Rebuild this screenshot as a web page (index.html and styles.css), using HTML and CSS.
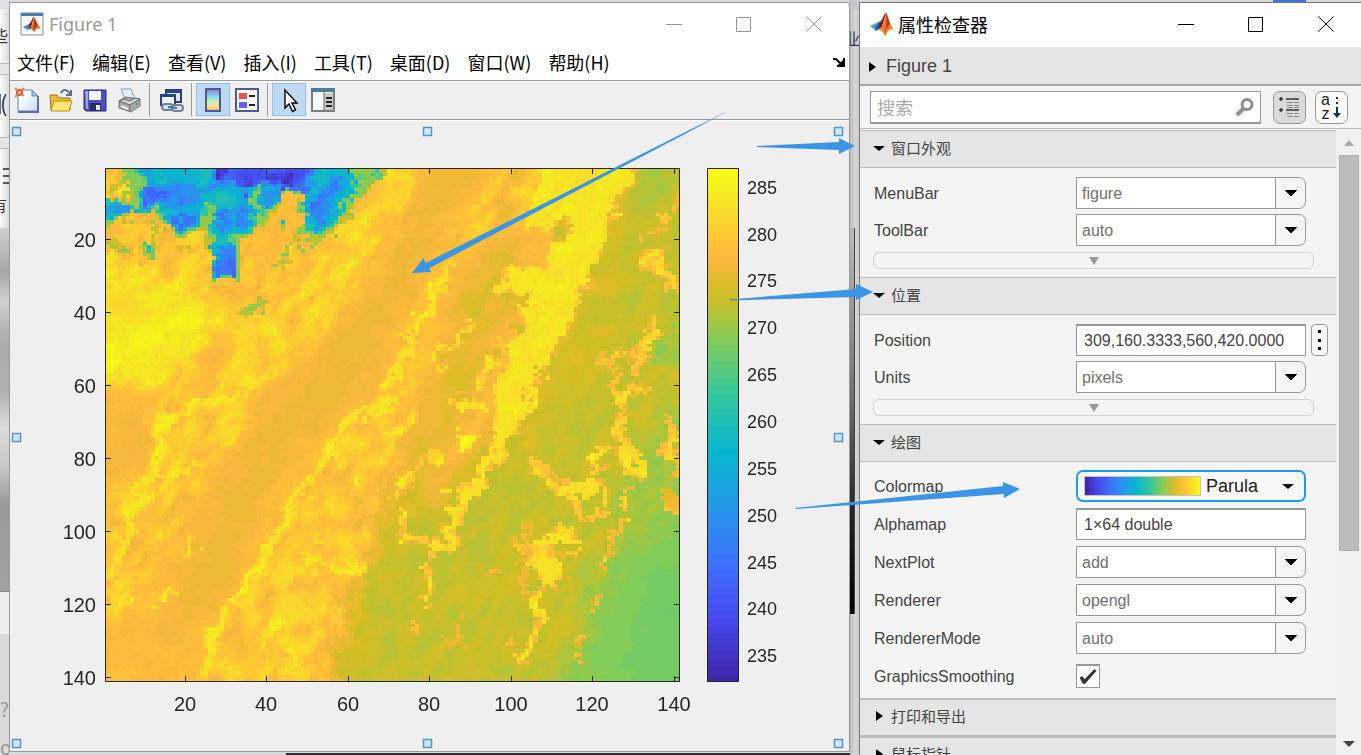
FILE: index.html
```html
<!DOCTYPE html>
<html lang="zh-CN">
<head>
<meta charset="utf-8">
<title>Figure 1</title>
<link rel="stylesheet" href="styles.css">
</head>
<body>
<div class="desktop">
  <div class="behind behind-left" aria-hidden="true">
    <span class="bl-top">些</span>
    <span class="bl-rule"></span>
    <span class="bl-paren">(</span>
    <span class="bl-rule"></span>
    <span class="bl-list"><i></i><i></i><i></i></span>
    <span class="bl-word">有</span>
    <span class="bl-photo"></span>
    <span class="bl-blank"></span>
    <span class="bl-foot">?</span>
    <span class="bl-foot">o</span>
  </div>

  <section class="window figure-window">
    <header class="titlebar inactive">
      <svg class="app-icon" width="24" height="24" viewBox="0 0 24 24"><path fill="#f4f6f7" stroke="#8b9299" d="M1 1h22v22H1z"/><path fill="#4c7ea3" d="M1 1h22v3H1z"/><path fill="#3e8bc4" d="M3 15l6-3 3-2-2 7-2 1z"/><path fill="#7d2a20" d="M9 12c3-2 3-7 5-7l-3 11-2 1z"/><path fill="#e0672a" d="M14 5c2 2 4 8 7 12-3-2-5 0-7 3-1-2-2-3-4-3 3-3 3-8 4-12z"/><path fill="#a52d1d" d="M14 5l3 8-3 4-1 3c1-4 2-9 1-15z"/></svg>
      <h1>Figure 1</h1>
      <div class="win-buttons">
        <button aria-label="最小化"><svg width="16" height="16"><path d="M0 8.500h16"/></svg></button>
        <button aria-label="最大化"><svg width="16" height="16"><path d="M.5 1.500h14v14H.5z"/></svg></button>
        <button aria-label="关闭"><svg width="16" height="16"><path d="M.5.500l15 15m0-15l-15 15"/></svg></button>
      </div>
    </header>
    <nav class="menubar">
      <button>文件(F)</button><button>编辑(E)</button><button>查看(V)</button><button>插入(I)</button><button>工具(T)</button><button>桌面(D)</button><button>窗口(W)</button><button>帮助(H)</button>
      <svg class="dock" width="12" height="10" viewBox="0 0 12 10"><path fill="none" stroke="#000" stroke-width="2" d="M0 2h3l5 5M11 1v8H4"/><path d="M11 2v7H4z"/></svg>
    </nav>
    <div class="toolbar">
      <button aria-label="新建"><svg width="26" height="26" viewBox="0 0 26 26"><defs><linearGradient id="page" x2="1" y2="1"><stop offset=".3" stop-color="#fff"/><stop offset="1" stop-color="#c3d6f3"/></linearGradient></defs><path fill="url(#page)" stroke="#6683b5" d="M4 3h14l6 6v15H4z"/><path stroke="#5a72a0" stroke-width="2" d="M24 9v16H4"  fill="none"/><path fill="#a9c1e6" stroke="#6683b5" d="M18 3v6h6z"/><path fill="none" stroke="#e08a60" stroke-width="2" d="M1 1l2 2m5 4l2 2M10 1L8 3M1 10l2-2"/><circle cx="5.500" cy="5.500" r="2.500" fill="#ffc88c" stroke="#d2603a" stroke-width="2"/></svg></button>
      <button aria-label="打开"><svg width="26" height="26" viewBox="0 0 26 26"><path fill="#e9bb3c" stroke="#a57512" d="M2 8h7l2 3h11v12H3z"/><path fill="#ffe678" stroke="#bf8e1d" d="M6 14h18l-3 10H3z"/><path fill="none" stroke="#5b7388" stroke-width="2" d="M13 6c2-4 7-4 9 1m1-4v5h-5"/></svg></button>
      <button aria-label="保存"><svg width="26" height="26" viewBox="0 0 26 26"><path fill="#4d51bd" stroke="#25297d" d="M2 3h22v21H4l-2-2z"/><path fill="#9ba3ed" d="M3 4h3v18H4z"/><path fill="#f4f6ff" d="M7 4h12v9H7z"/><path fill="#272b62" d="M8 16h11v8H8z"/><path fill="#e6e8ef" d="M14 18h4v5h-4z"/></svg></button>
      <button aria-label="打印"><svg width="26" height="26" viewBox="0 0 26 26"><path fill="#e2efff" stroke="#86a4c4" d="M5 2h10l4 10H9z"/><path fill="#a9a9a5" stroke="#777" d="M3 14l6-4 15 2v7l-9 6L3 21z"/><path fill="#d0d0d0" stroke="#666" d="M3 14l11 4 10-6-5-1-5 3-6-2z"/><path fill="none" stroke="#666" d="M14 18v6"/><path stroke="#eee" stroke-width="2" d="M5 19l7 3"/><path stroke="#47b44b" stroke-width="2" d="M20 17h2"/></svg></button>
      <span class="sep"></span>
      <button aria-label="链接绘图"><svg width="26" height="26" viewBox="0 0 26 26"><path fill="#dce5f4" stroke="#28437e" stroke-width="2" d="M8 3h15v12H8z"/><path fill="#28437e" d="M7 2h17v4H7z"/><path fill="#eef3fa" stroke="#28437e" stroke-width="2" d="M3 8h14v10H3z"/><path fill="#28437e" d="M2 7h16v3H2z"/><g fill="#dce5ee" stroke="#6d839c" stroke-width="2"><rect x="4" y="17" width="11" height="6" rx="3"/><rect x="14" y="18" width="11" height="6" rx="3"/></g><path stroke="#526b87" stroke-width="2" d="M10 20l9 1"/></svg></button>
      <span class="sep"></span>
      <button class="on" aria-label="颜色栏"><svg width="26" height="26" viewBox="0 0 26 26"><defs><linearGradient id="cb" x2="0" y2="1"><stop stop-color="#8b7cd8"/><stop offset=".35" stop-color="#8bdcf2"/><stop offset=".6" stop-color="#c9efa9"/><stop offset=".8" stop-color="#ffe48b"/><stop offset="1" stop-color="#f4a98f"/></linearGradient></defs><path fill="url(#cb)" stroke="#4d5c8e" stroke-width="2" d="M6 2h14v22H6z"/></svg></button>
      <button aria-label="图例"><svg width="26" height="26" viewBox="0 0 26 26"><path fill="#f8f8ff" stroke="#4d5c8e" stroke-width="2" d="M2 2h22v22H2z"/><path fill="#e35454" d="M5 6h8v6H5z"/><path fill="#6464e8" d="M5 15h8v6H5z"/><path stroke="#222" stroke-width="2" d="M15 9h6m-6 9h6"/></svg></button>
      <span class="sep"></span>
      <button class="on" aria-label="编辑绘图"><svg width="26" height="26" viewBox="0 0 26 26"><path fill="#fff" stroke="#000" stroke-width="1.400" d="M9 3v18l4-4 3.500 7.500 3-1.500-3.500-7h5z"/></svg></button>
      <button aria-label="属性检查器"><svg width="26" height="26" viewBox="0 0 26 26"><path fill="#f6f6f6" stroke="#7c7c7c" stroke-width="2" d="M2 3h22v21H2z"/><path fill="#4f7c9d" d="M1 1h24v4H1z"/><path fill="#c9c9c9" d="M14 6h9v17h-9z"/><path stroke="#666" d="M14 5v19"/><path stroke="#222" stroke-width="2" d="M16 11h6m-6 4h6m-6 4h6"/></svg></button>
    </div>
    <div class="canvas-area">
      <svg class="chart" viewBox="10 121 839 630">
        <foreignObject x="106" y="169" width="574" height="513"><canvas id="heat" class="heat" width="141" height="141"></canvas></foreignObject>
        <path class="axis" d="M105.500 168.500h574v513h-574z"/>
        <path class="axis" id="ticks" d=""/>
        <g class="x-labels"><text x="185" y="711">20</text><text x="266" y="711">40</text><text x="348" y="711">60</text><text x="429" y="711">80</text><text x="511" y="711">100</text><text x="592" y="711">120</text><text x="674" y="711">140</text></g>
        <g class="y-labels"><text x="96" y="247">20</text><text x="96" y="320">40</text><text x="96" y="393">60</text><text x="96" y="466">80</text><text x="96" y="539">100</text><text x="96" y="612">120</text><text x="96" y="685">140</text></g>
        <foreignObject x="707" y="168" width="32" height="514"><canvas id="bar" class="bar" width="1" height="64"></canvas></foreignObject>
        <path class="axis" d="M707.500 168.500h31v513h-31z"/>
        <g class="bar-labels"><text x="747" y="194">285</text><text x="747" y="241">280</text><text x="747" y="287">275</text><text x="747" y="334">270</text><text x="747" y="381">265</text><text x="747" y="428">260</text><text x="747" y="475">255</text><text x="747" y="522">250</text><text x="747" y="569">245</text><text x="747" y="615">240</text><text x="747" y="662">235</text></g>
        <g class="handles"><path d="M12.500 127.500h8v8h-8zM423.500 127.500h8v8h-8zM834.500 127.500h8v8h-8zM12.500 433.500h8v8h-8zM834.500 433.500h8v8h-8zM12.500 739.500h8v8h-8zM423.500 739.500h8v8h-8zM834.500 739.500h8v8h-8z"/></g>
      </svg>
    </div>
  </section>

  <div class="behind behind-mid" aria-hidden="true"><span class="bm-word">业</span><span class="bm-gray"></span></div>

  <section class="window inspector">
    <header class="titlebar">
      <svg class="app-icon" width="24" height="24" viewBox="0 0 24 24"><path fill="#4aa0d8" d="M0 14l8-4 4-2-2 8-4 3z"/><path fill="#2a5f94" d="M5 15l5-5 2-1-3 8-3 2z"/><path fill="#6b2222" d="M9 11c4-2 4-9 7-10l-4 14-3 2z"/><path fill="#ee7b2c" d="M16 0c2 3 4 13 8 19-4-4-6 0-9 5-1-3-3-6-6-6 5-4 5-12 7-18z"/><path fill="#c03a1e" d="M16 0l4 12-4 5-2 6c2-7 3-14 2-23z"/></svg>
      <h2>属性检查器</h2>
      <div class="win-buttons">
        <button aria-label="最小化"><svg width="16" height="16"><path d="M0 8.500h16"/></svg></button>
        <button aria-label="最大化"><svg width="16" height="16"><path d="M.5 1.500h14v14H.5z"/></svg></button>
        <button aria-label="关闭"><svg width="16" height="16"><path d="M.5.500l15 15m0-15l-15 15"/></svg></button>
      </div>
    </header>
    <div class="object-row"><span class="tri-right"></span><span>Figure 1</span></div>
    <div class="search-row">
      <label class="search"><input type="search" placeholder="搜索" aria-label="搜索"><svg width="20" height="20" viewBox="0 0 20 20" fill="none" stroke="#8c8c8c"><circle cx="12" cy="7.500" r="5" stroke-width="3"/><path stroke-width="4" d="M8 12l-6 6"/></svg></label>
      <button class="tool pressed" aria-label="按组查看"><svg width="24" height="24" viewBox="0 0 24 24"><path stroke="#333" stroke-width="1.500" d="M1 4h4M3 2v4M1 15h4M3 13v4M8 4h13M8 15h13"/><path stroke="#888" stroke-dasharray="6 1" d="M9 7.500h12M9 10.500h12M9 12.500h12M9 18.500h12M9 21.500h12"/></svg></button>
      <button class="tool" aria-label="按字母排序"><span class="az">a<br>z</span><svg width="10" height="24" viewBox="0 0 10 24"><path fill="#12335c" d="M4 2h2v2H4zM4 7h2v2H4zM4 12h2v6h3l-4 5-4-5h3z"/></svg></button>
    </div>
    <div class="scroll-pane">
      <div class="groups">
        <section class="group">
          <h3><span class="tri-down"></span>窗口外观</h3>
          <div class="rows">
            <div class="row"><label for="mb">MenuBar</label><select id="mb"><option>figure</option></select></div>
            <div class="row"><label for="tb">ToolBar</label><select id="tb"><option>auto</option></select></div>
          </div>
          <button class="more" aria-label="显示更多"><span></span></button>
        </section>
        <section class="group">
          <h3><span class="tri-down"></span>位置</h3>
          <div class="rows">
            <div class="row"><label for="ps">Position</label><input id="ps" type="text" value="309,160.3333,560,420.0000"><button class="dots" aria-label="编辑"><i></i><i></i><i></i></button></div>
            <div class="row"><label for="un">Units</label><select id="un"><option>pixels</option></select></div>
          </div>
          <button class="more" aria-label="显示更多"><span></span></button>
        </section>
        <section class="group long">
          <h3><span class="tri-down"></span>绘图</h3>
          <div class="rows">
            <div class="row"><label for="cm">Colormap</label><button id="cm" class="colormap"><span class="swatch"></span>Parula<span class="tri-down"></span></button></div>
            <div class="row"><label for="am">Alphamap</label><input id="am" type="text" value="1×64 double"></div>
            <div class="row"><label for="np">NextPlot</label><select id="np"><option>add</option></select></div>
            <div class="row"><label for="rd">Renderer</label><select id="rd"><option>opengl</option></select></div>
            <div class="row"><label for="rm">RendererMode</label><select id="rm"><option>auto</option></select></div>
            <div class="row"><label for="gs">GraphicsSmoothing</label><input id="gs" type="checkbox" checked></div>
          </div>
        </section>
        <h3 class="closed"><span class="tri-right"></span>打印和导出</h3>
        <h3 class="closed"><span class="tri-right"></span>鼠标指针</h3>
      </div>
      <div class="scrollbar"><span class="up"></span><span class="thumb"></span><span class="down"></span></div>
    </div>
  </section>
  <svg class="arrows" width="1361" height="755" aria-hidden="true">
    <defs><linearGradient id="fade" gradientUnits="userSpaceOnUse" x1="726" y1="112" x2="690" y2="130"><stop stop-color="#3a95e6" stop-opacity=".3"/><stop offset="1" stop-color="#3a95e6"/></linearGradient></defs>
    <path fill="url(#fade)" d="M726 111.500L425.500 263 423.500 258 412 273 431 272 429.500 268 726 112.500z"/>
    <path d="M757 146L839 142V138L855 146 839 154V150L757 147z"/>
    <path d="M730 299.500L856 289V284L873 292 856 300V297L730 300.500z"/>
    <path d="M795 508L1003 486V482L1020 489 1004 498V494L796 509z"/>
  </svg>
</div>
<script src="plot.js"></script>
</body>
</html>
```
FILE: styles.css
```css
* { box-sizing: border-box; }
body { margin: 0; font-family: "Liberation Sans", "Noto Sans CJK SC", sans-serif; color: #444; overflow: hidden; }
button, input, select { font: inherit; color: inherit; }
button { border: 0; background: none; padding: 0; }
h1, h2, h3 { margin: 0; font-weight: 400; }

.desktop { position: relative; display: grid; grid-template-columns: 9px minmax(0, 841fr) 9px minmax(0, 502fr); align-items: start; height: 100vh; overflow: hidden; background: linear-gradient(90deg, #d5d6d8 286px, #303038 286px, #303038 850px, #d5d6d8 850px) 0 753px / 100% 2px no-repeat, linear-gradient(90deg, #d8d9dc 1273px, #3974d6 1273px, #3974d6 1306px, #d8d9dc 1306px); }

.behind { height: 100vh; overflow: hidden; display: flex; flex-direction: column; font-family: "Noto Sans CJK SC", sans-serif; }
.behind > * { flex: none; }
.behind-left { background: linear-gradient(90deg, #fafafa, #dcdcdc); border-top: 9px solid #dfe1e4; color: #333; }
.bl-top { height: 54px; padding-top: 14px; font-size: 16px; line-height: 24px; margin-left: -8px; }
.bl-rule { height: 12px; border: solid #bbb; border-width: 1px 0; background: #e6e6e6; }
.bl-paren { height: 62px; line-height: 54px; font-size: 22px; background: linear-gradient(#3c7fc4, #3c7fc4) 0 19px / 1px 20px no-repeat; }
.bl-list { height: 50px; padding: 19px 0 0 3px; display: flex; flex-direction: column; gap: 5px; }
.bl-list i { height: 2px; background: #556; }
.bl-word { height: 29px; margin-left: -8px; font-size: 15px; line-height: 12px; }
.bl-photo { height: 364px; border-bottom: 1px solid #888; background: linear-gradient(#d0d0d0, #a6a6a6 12%, #cfcfcf 20%, #aaa 32%, #b0b0b0 45%, #dcdcdc 55%, #c6c6c6 66%, #999 76%, #a2a2a2); }
.bl-blank { height: 98px; border-bottom: 56px solid #d9d9d9; background: #eee; }
.bl-foot { height: 38px; line-height: 38px; color: #999; font-size: 19px; background: #d9d9d9; }
.behind-mid { background: linear-gradient(90deg, #bcbcbc, #d6d6d6 5px, #cecece); border-top: 9px solid #c4c7cc; }
.bm-word { height: 219px; padding-top: 17px; font-size: 16px; line-height: 24px; color: #335; margin-left: -6px; }
.bm-gray { width: 5px; height: 386px; border-right: 1px solid #444; background: linear-gradient(#bbb, #777 40%, #222 75%, #000); }

.window { margin-top: 2px; border: 1px solid #999; background: #fff; display: flex; flex-direction: column; }
.titlebar { height: 44px; flex: none; display: flex; align-items: center; padding: 0 0 2px 10px; color: #000; }
.titlebar h1 { font: 18px/24px "Noto Sans", sans-serif; margin-left: 5px; flex: 1; }
.titlebar h2 { font: 18px/24px "Noto Sans CJK SC", sans-serif; margin-left: 4px; flex: 1; }
.titlebar.inactive { color: #999; }
.win-buttons { display: flex; }
.win-buttons button { width: 70px; height: 42px; display: grid; place-items: center; }
.win-buttons path { fill: none; stroke: currentColor; }
.menubar { height: 34px; display: flex; align-items: center; gap: 17px; padding: 0 4px 4px 7px; border-bottom: 1px solid #999; font: 18px/24px "Noto Sans CJK SC", sans-serif; color: #000; }
.menubar .dock { margin-left: auto; }
.toolbar { height: 39px; display: flex; align-items: start; padding-top: 1px; background: #efefef; border-bottom: 1px solid #999; border-top: 1px solid #fff; }
.toolbar button { width: 34px; height: 33px; display: grid; place-items: center; border: 1px solid transparent; }
.toolbar button.on { background: #bfdaf0; border-color: #90c4f0; }
.sep { width: 8px; height: 33px; background: linear-gradient(#999, #999) 3px 0 / 1px 100% no-repeat; }
.canvas-area { background: #efefef; border-top: 1px solid #fff; }
.chart { display: block; width: 100%; }
.heat, .bar { display: block; width: 100%; height: 100%; image-rendering: pixelated; }
.axis { fill: none; stroke: #262626; }
.x-labels { text-anchor: middle; font-size: 20px; fill: #262626; }
.y-labels { text-anchor: end; font-size: 20px; fill: #262626; }
.bar-labels { font-size: 18px; fill: #262626; }
.handles { fill: #cfe6f7; stroke: #5596c4; stroke-width: 1.5; }

.inspector { height: calc(100vh - 2px); border-color: #777; border-right: 0; border-bottom: 0; background: #f4f4f4; overflow: hidden; }
.inspector .titlebar { background: #fff; }
.object-row { height: 39px; flex: none; display: flex; align-items: center; gap: 10px; padding: 2px 0 0 9px; background: #e5e5e5; border-bottom: 2px solid #aaa; font-size: 18px; }
.tri-right { border: solid transparent; border-width: 5px 0 5px 7px; border-left-color: #000; }
.tri-down { border: solid transparent; border-width: 5px 6px 0; border-top-color: #000; }
.search-row { height: 43px; flex: none; display: flex; align-items: center; padding: 0 13px 0 10px; border-bottom: 1px solid #bbb; }
.search { flex: 1; height: 33px; display: flex; align-items: center; padding: 0 5px 0 6px; margin-right: 12px; background: #fff; border: 1px solid #999; border-bottom-width: 2px; }
.search input { flex: 1; min-width: 0; border: 0; padding: 0; outline: 0; background: none; font: 18px/24px "Noto Sans CJK SC", sans-serif; }
.search input::placeholder { color: #aaa; }
.tool { width: 33px; height: 33px; display: flex; align-items: center; justify-content: center; gap: 2px; border: 1px solid #999; border-radius: 7px; background: #fafafa; }
.tool.pressed { background: #dadada; margin-right: 9px; }
.az { font-size: 16px; line-height: 14px; color: #222; }
.scroll-pane { flex: 1; min-height: 0; display: flex; align-items: stretch; margin-top: 1px; }
.groups { flex: 1; overflow: hidden; }
h3 { height: 38px; display: flex; align-items: center; gap: 6px; padding: 0 0 2px 13px; background: #e5e5e5; border: solid #bcbcbc; border-width: 1px 0; font: 15px/20px "Noto Sans CJK SC", sans-serif; }
.closed { border-top-width: 2px; gap: 8px; padding: 0 0 4px 16px; }
.rows { display: flex; flex-direction: column; gap: 5px; padding: 9px 0 6px 14px; }
.long .rows { gap: 6px; padding: 8px 0 6px 14px; }
.row { display: grid; grid-template-columns: 202fr 230fr 30px; align-items: center; height: 32px; font-size: 16px; }
.row label { padding-top: 2px; }
.row input, .row select { width: 100%; height: 32px; border: 1px solid #999; border-radius: 0; background: #fff; padding: 0 7px; outline: 0; }
.row input { border-top-width: 2px; }
.row select { appearance: none; border-radius: 0 7px 7px 0; padding: 0 30px 0 5px; color: #707070; background: linear-gradient(to bottom left, #000 50%, transparent 51%) right 14px center / 6px 6px no-repeat, linear-gradient(to bottom right, #000 50%, transparent 51%) right 8px center / 6px 6px no-repeat, linear-gradient(90deg, #999 1px, #f5f5f5 1px) right / 30px 100% no-repeat, #fff; }
.row input[type="checkbox"] { appearance: none; margin: 0; width: 24px; height: 24px; padding: 0; display: grid; place-items: center; }
.row input[type="checkbox"]::after { content: ""; width: 17px; height: 15px; background: #333; clip-path: polygon(0 56%, 16% 48%, 30% 68%, 88% 0, 100% 12%, 32% 100%, 20% 98%); }
.dots { margin-left: 5px; width: 17px; height: 32px; display: flex; flex-direction: column; align-items: center; justify-content: space-evenly; border: 1px solid #999; border-radius: 4px; background: #fafafa; }
.dots i { width: 3px; height: 3px; background: #000; }
.more { display: grid; place-items: center; width: calc(100% - 35px); height: 17px; margin: 0 0 8px 13px; border: 1px solid #d2d2d2; border-radius: 6px; }
.more span { border: solid transparent; border-width: 8px 5px 0; border-top-color: #999; }
.colormap { height: 32px; display: flex; align-items: center; padding: 0 10px 0 6px; border: 2px solid #1d9bf0; border-radius: 7px; background: #f8f8f8; font-size: 18px; color: #222; }
.colormap .tri-down { margin-left: auto; }
.swatch { width: 117px; height: 20px; margin-right: 5px; border: 1px solid #c4c4c4; background: linear-gradient(90deg, #3e26a8, #4747eb 11%, #3e6fff 22%, #2797eb 33%, #08b5d0 44%, #31c69f 56%, #81cc59 67%, #dcbd29 78%, #fec338 86%, #f9fb15); }
.scrollbar { width: 25px; display: flex; flex-direction: column; align-items: center; background: #f0f0f0; }
.up { margin: 10px 0 9px; border: solid transparent; border-width: 0 5px 6px; border-bottom-color: #aaa; }
.thumb { width: 20px; flex: 395; background: #bbb; border: 1px solid #aeaeae; }
.scrollbar::after { content: ""; flex: 191; order: 1; }
.down { order: 2; margin-bottom: 8px; border: solid transparent; border-width: 6px 6px 0; border-top-color: #444; }
.arrows { position: absolute; left: 0; top: 0; pointer-events: none; fill: #3a95e6; }
```
FILE: plot.js
```js
// Parula colour stops: position, red, green, blue
const STOPS = [[0,62,38,168],[.111,71,71,235],[.222,62,111,255],[.333,39,151,235],[.444,8,181,208],[.556,49,198,159],[.667,129,204,89],[.74,195,193,43],[.778,220,189,41],[.81,239,185,53],[.83,249,185,62],[.86,255,194,56],[.889,252,207,48],[.945,245,228,37],[1,249,251,21]];
function parula(t) {
  t = Math.round(Math.max(0, Math.min(1, t)) * 63) / 63;
  let i = 1;
  while (i < STOPS.length - 1 && STOPS[i][0] < t) i++;
  const a = STOPS[i - 1], b = STOPS[i], f = (t - a[0]) / (b[0] - a[0]);
  return [1, 2, 3].map(k => a[k] + (b[k] - a[k]) * f);
}

// Field shapes in chart coordinates; a width of 0 makes a filled area.
// The areas up to SOFT have blurred edges.
const SOFT = 18;
const SHAPES = [
  [.88,0,[90,150,250,150,250,250,230,310,180,400,90,400]],
  [.93,0,[90,270,160,275,210,295,225,312,180,375,160,390,90,385]],
  [.975,0,[90,348,150,315,205,308,190,335,140,365,130,385,90,375]],
  [.835,0,[90,386,135,384,162,400,158,425,140,465,90,500]],
  [.81,0,[90,475,130,440,160,415,165,425,140,465,90,510]],
  [.89,0,[330,220,375,150,430,150,400,220,345,300,300,345,245,425,160,470,155,420,185,380,220,330,255,270]],
  [.805,14,[225,335,205,370,188,400]],
  [.875,0,[165,425,240,405,225,440,195,490,165,540,140,600,90,640,90,510,140,470]],
  [.875,0,[400,405,410,440,380,520,355,580,335,640,320,700,190,700,230,620,260,550,300,480,340,435]],
  [.81,0,[430,150,495,150,455,215,420,265,400,300,385,340,340,410,310,440,270,490,245,540,215,600,185,640,165,640,172,600,195,540,215,500,240,450,260,410,310,360,350,320,385,270,410,220]],
  [.86,0,[500,150,560,150,545,230,490,300,440,400,390,440,370,430,390,380,430,290,450,230]],
  [.79,0,[470,260,520,235,520,300,490,330,480,400,450,440,420,520,390,540,370,530,400,450,425,400,440,340]],
  [.745,0,[640,150,700,150,700,700,325,700,350,610,375,540,400,515,440,500,470,460,505,430,535,390,560,330,595,265,615,220]],
  [.71,0,[642,150,668,150,670,195,650,205,635,190]],
  [.765,0,[540,350,590,340,600,270,620,240,630,340,560,420,520,480,500,460]],
  [.70,0,[660,410,700,390,700,700,545,700,580,620,600,550,625,480,640,440]],
  [.67,0,[700,500,655,522,625,565,600,600,575,700,700,700]],
  [.647,0,[700,555,658,568,642,600,632,640,622,700,700,700]],
  [.695,0,[680,325,670,340,655,345,652,365,680,372]],
  [.945,0,[540,169,638,169,620,195,612,225,595,262,578,300,560,330,545,365,530,400,520,425,505,442,485,482,466,508,455,512,460,500,480,470,497,435,500,402,496,380,510,345,523,318,518,300,488,290,500,275,540,265,560,225,520,235,535,200]],
  [.95,9,[455,508,450,535,450,548]],
  [.94,8,[500,345,485,370,475,395]],
  [.94,7,[455,260,442,280,432,305,413,335,400,365,382,390]],
  [.93,5,[470,320,445,350,435,370]],[.94,11,[455,400,470,408,490,408]],
  [.77,14,[565,220,558,240]],[.77,11,[513,255,506,268]],[.77,7,[519,320,516,337]],[.77,10,[500,303,530,297]],[.78,8,[500,350,490,355]],
  [.95,8,[250,390,215,402,194,404,162,427,158,460,142,490,135,525,120,545,108,580]],
  [.97,7,[170,420,165,437]],[.97,8,[125,600,129,606]],
  [.94,9,[400,400,360,415,338,440,320,465,295,500,282,530,255,570,244,588,225,612,208,655,205,675]],
  [.96,9,[245,585,250,590]],[.95,6,[310,560,330,567,365,568]],[.94,5,[320,530,310,555,300,575]],[.94,7,[280,620,267,628,265,645]],[.94,9,[287,648,292,662]],[.95,13,[352,480,358,484]],
  [.94,7,[140,510,158,490,170,475,210,465]],[.94,5,[195,534,196,550,182,558]],[.94,5,[172,590,168,600,155,605]],
  [.97,12,[460,430,470,440,462,455]],[.92,7,[440,455,415,468,402,490,398,495]],[.93,6,[440,485,470,487,490,470]],[.94,7,[380,435,405,430,410,415]],
  [.93,5,[402,510,405,535,425,543,433,552,430,565,435,592,425,605]],[.93,7,[428,540,438,553,455,545,455,510]],
  [.92,11,[618,412,624,440,630,460,641,478]],[.9,7,[612,443,590,457,600,470]],
  [.93,13,[562,487,600,485]],[.9,7,[530,455,548,473,562,490,580,500,585,520]],[.89,5,[602,480,600,515,580,520]],
  [.93,11,[575,532,545,538,533,560]],[.93,16,[538,545,548,570,558,590]],[.88,6,[525,530,520,545,570,555,580,553]],
  [.93,9,[545,590,536,600,540,625,530,645,522,657]],[.87,4,[500,640,515,655,530,670]],[.94,11,[518,655,524,665]],
  [.92,11,[655,250,665,270,674,290]],[.9,8,[640,260,655,265]],[.91,9,[656,315,653,335,643,355,638,372]],[.88,7,[638,355,600,360,612,370,620,400]],
  [.9,11,[640,385,623,397,618,412]],[.88,7,[668,417,668,450,679,470]],[.87,5,[678,190,665,220,640,240]],
  [.88,4,[629,490,629,520,617,528,607,550,603,575]],[.87,4,[597,598,592,614]],[.87,4,[581,628,575,660]],[.87,5,[668,490,668,508,679,514]],
  [.83,5,[487,570,500,575]],[.82,5,[460,600,457,640]],[.83,4,[440,640,465,645]],[.95,4,[415,630,416,637]],[.82,7,[525,525,525,600]],
  [.7,7,[98,247,128,246]],[.5,0,[141,246,158,246,157,257,140,255]],[.65,5,[147,255,143,268]],
  [.67,0,[124,160,145,160,140,205,128,200]],[.72,5,[110,195,122,180]],
  [.7,7,[152,215,158,245]],[.75,5,[170,232,210,232,212,265]],[.73,4,[180,250,197,247]],
  [.68,0,[140,160,384,160,370,180,354,205,338,234,320,242,302,235,302,205,314,190,280,190,278,210,265,218,250,232,237,235,242,248,240,282,212,282,210,232,165,232,158,214,138,214]],
  [.44,0,[141,160,366,160,350,195,337,228,320,233,307,228,304,210,310,192,300,188,278,188,276,205,265,208,250,222,252,230,230,232,228,245,215,245,213,220,204,205,198,228,170,229,162,211,139,211,142,190]],
  [.68,8,[205,208,213,220]],[.7,7,[260,190,250,195,255,207,275,208]],
  [.31,0,[143,188,165,184,200,190,220,172,310,165,318,185,300,194,260,187,210,190,195,205,150,210]],
  [.2,0,[146,190,170,190,165,200,150,200]],[.28,8,[170,220,196,220]],[.27,7,[223,210,223,230]],[.28,10,[232,218,246,222]],
  [.3,12,[262,201,276,202]],[.2,5,[236,199,244,200]],
  [.3,0,[318,205,328,178,345,175,334,205,327,224,310,226]],
  [.17,0,[200,160,314,160,308,188,285,193,270,183,240,180,215,178]],
  [.07,0,[208,160,236,160,232,174,210,175]],[.08,7,[240,182,254,184]],[.09,7,[265,176,300,180]],
  [.7,0,[95,202,125,196,139,202,136,218,115,224,95,223]],
  [.36,0,[95,206,120,201,134,204,130,214,115,219,95,218]],[.5,4,[112,200,122,199]],
  [.24,0,[213,243,236,245,235,278,214,279]],[.6,5,[236,275,236,280]],
  [.5,5,[286,223,286,229]],[.66,5,[310,234,295,238,286,250,277,268]],[.66,4,[305,240,308,252]],[.45,4,[265,290,268,291]],
  [.5,5,[373,165,374,179]],[.7,9,[244,317,256,308,262,304]],[.72,4,[258,283,258,288]],[.72,4,[106,297,112,293]]
];

const N = 141, X0 = 106, Y0 = 169, W = 574, H = 513;
const field = document.createElement("canvas");
field.width = field.height = N;
const f = field.getContext("2d", { willReadFrequently: true });
const gray = t => { const g = Math.round(t * 255); return `rgb(${g},${g},${g})`; };
f.fillStyle = gray(.845);
f.fillRect(0, 0, N, N);
f.setTransform(N / W, 0, 0, N / H, -X0 * N / W, -Y0 * N / H);
f.lineJoin = "round";
SHAPES.forEach(([t, width, p], index) => {
  f.filter = index < SOFT ? "blur(2px)" : "none";
  f.beginPath();
  for (let i = 0; i < p.length; i += 2) f.lineTo(p[i], p[i + 1]);
  if (width) { f.strokeStyle = gray(t); f.lineWidth = width; f.stroke(); }
  else { f.fillStyle = gray(t); f.fill(); }
});
const src = f.getImageData(0, 0, N, N).data;

function hash(x, y) {
  let h = Math.imul(x, 374761393) + Math.imul(y, 668265263) | 0;
  h = Math.imul(h ^ h >>> 13, 1274126177);
  return ((h ^ h >>> 16) >>> 0) / 4294967295 * 2 - 1;
}
function smooth(x, y) {
  const i = Math.floor(x), j = Math.floor(y), u = x - i, v = y - j;
  return (hash(i, j) * (1 - u) + hash(i + 1, j) * u) * (1 - v) + (hash(i, j + 1) * (1 - u) + hash(i + 1, j + 1) * u) * v;
}
function amplitude(t) {
  if (t < .6) return .08;
  if (t < .685) return .006;
  if (t < .8) return .03;
  if (t < .822) return .009;
  if (t < .855) return .02;
  if (t < .925) return .07;
  return .03;
}
const heat = document.getElementById("heat").getContext("2d");
const out = heat.createImageData(N, N);
for (let r = 0; r < N; r++) for (let c = 0; c < N; c++) {
  const wx = smooth(c / 3 + 50, r / 3) * 2 + hash(c, r + 400) * .6;
  const wy = smooth(c / 3, r / 3 + 90) * 2 + hash(c + 300, r) * .6;
  const sx = Math.max(0, Math.min(N - 1, Math.round(c + wx)));
  const sy = Math.max(0, Math.min(N - 1, Math.round(r + wy)));
  let t = src[(sy * N + sx) * 4] / 255;
  // grain is elongated along the main diagonal
  const n = smooth((c + r * .5) / 2.5, (r - c * .3) / 4) * .9 + hash(c + 7, r + 11) * .25;
  t += n * amplitude(t);
  out.data.set([...parula(t), 255], (r * N + c) * 4);
}
heat.putImageData(out, 0, 0);

const bar = document.getElementById("bar").getContext("2d");
for (let i = 0; i < 64; i++) {
  bar.fillStyle = `rgb(${parula(1 - i / 63).map(Math.round)})`;
  bar.fillRect(0, i, 1, 1);
}

let d = "";
for (let k = 1; k <= 7; k++) {
  const x = Math.round(103.500 + k * 81.45) + .5, y = Math.round(166 + k * 73) + .5;
  d += `M${x} 169v5M${x} 681v-5M106 ${y}h5M679 ${y}h-5`;
}
for (let k = 0; k < 11; k++) d += `M739 ${Math.round(185 + k * 46.9) + .5}h-6`;
document.getElementById("ticks").setAttribute("d", d);
```
